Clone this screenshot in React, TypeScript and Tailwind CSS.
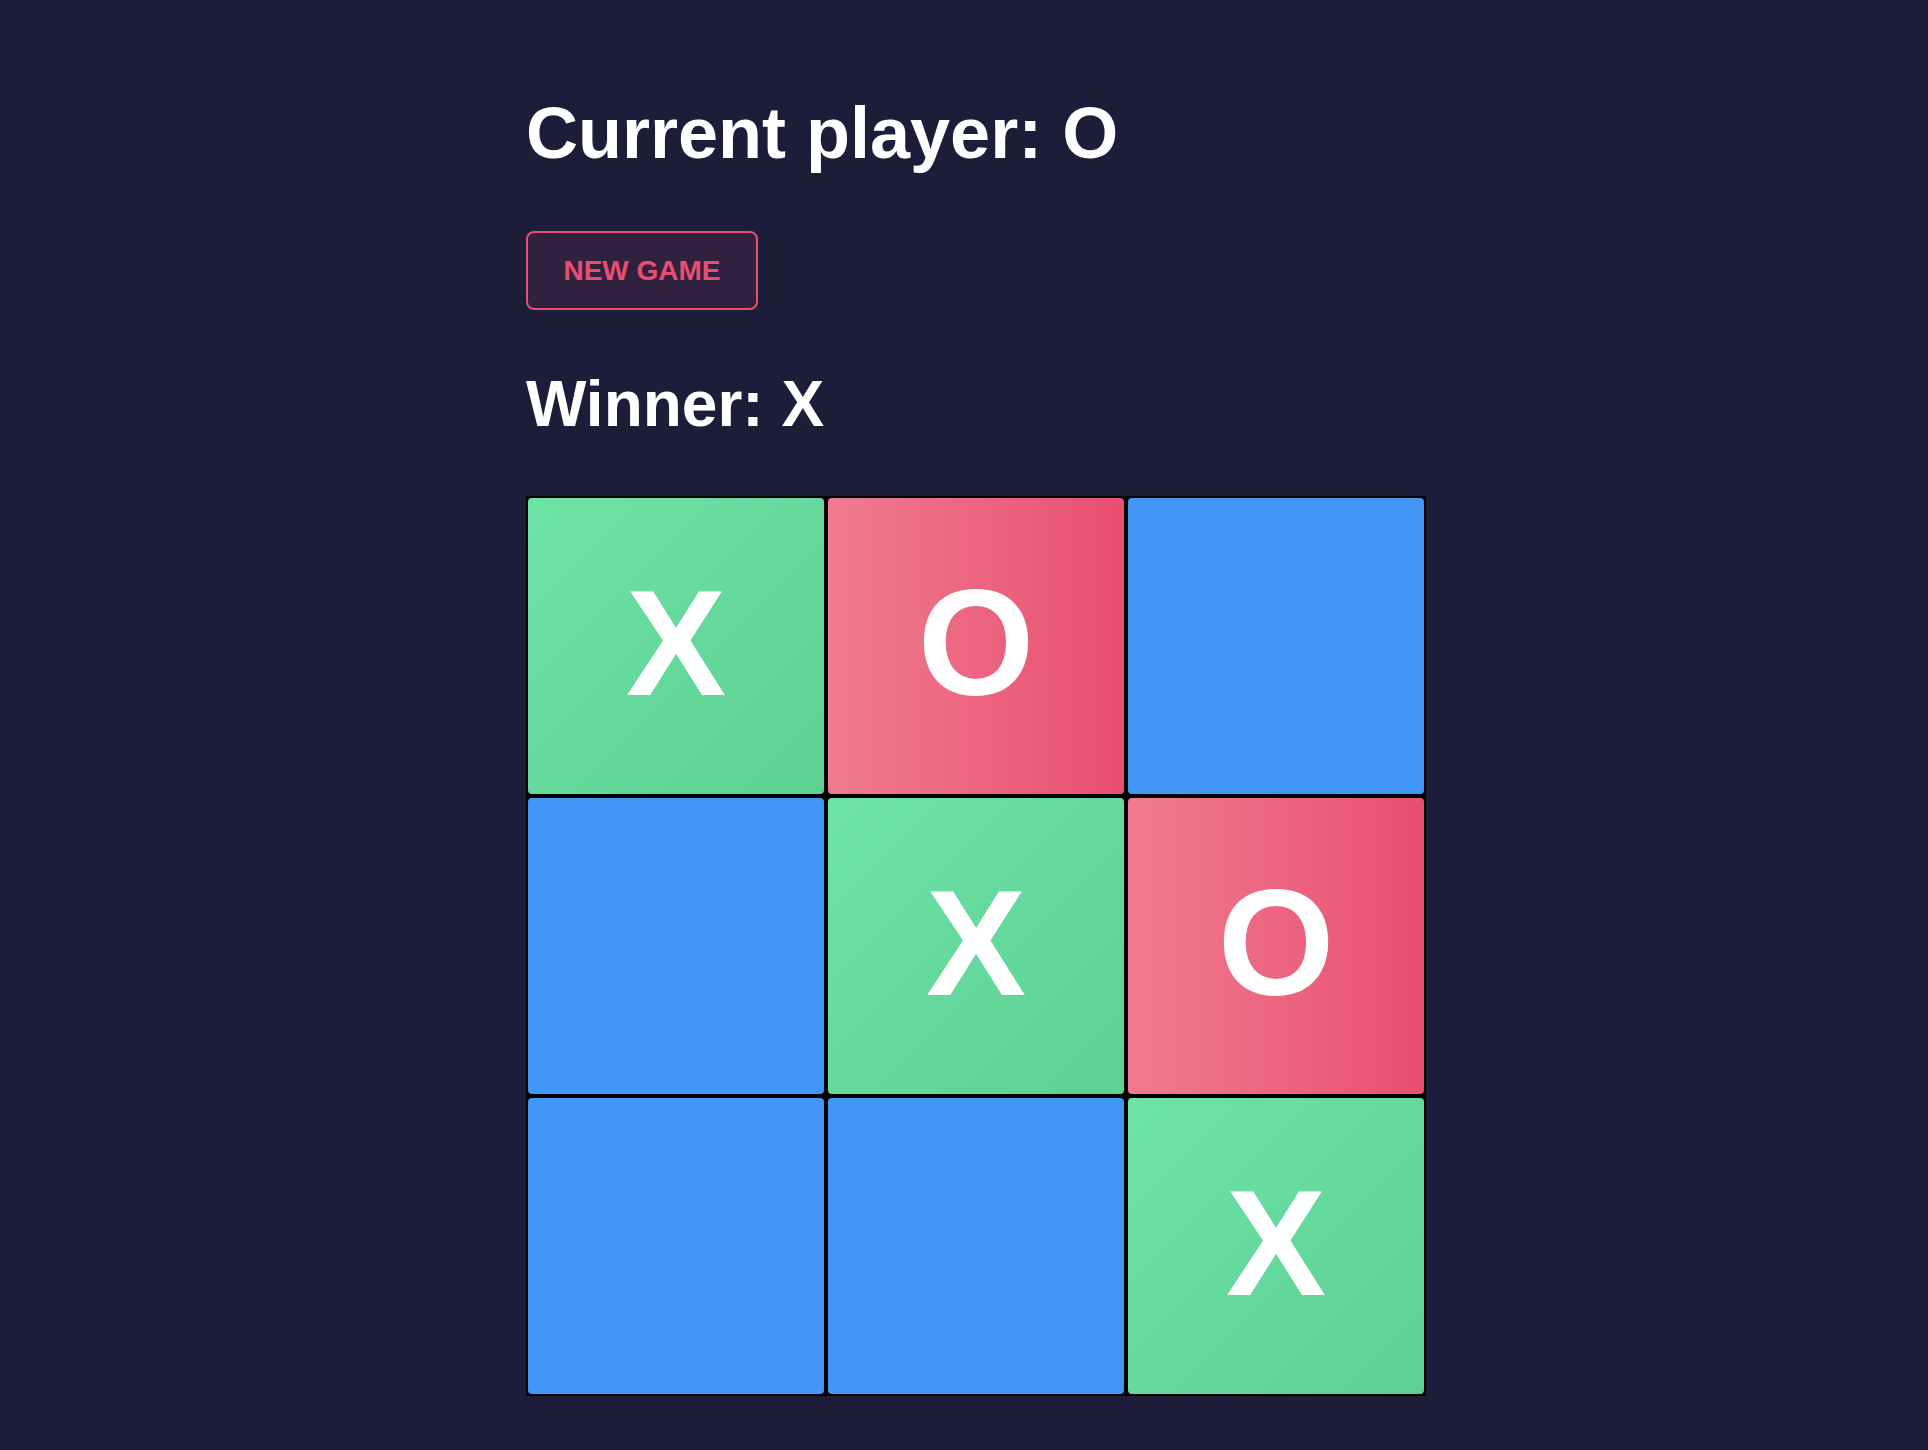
import { useState } from "react";

type Mark = "X" | "O" | null;

const initialBoard: Mark[] = ["X", "O", null, null, "X", "O", null, null, "X"];

const lines = [
  [0, 1, 2], [3, 4, 5], [6, 7, 8],
  [0, 3, 6], [1, 4, 7], [2, 5, 8],
  [0, 4, 8], [2, 4, 6],
];

function getWinner(board: Mark[]): Mark {
  for (const [a, b, c] of lines) {
    if (board[a] && board[a] === board[b] && board[a] === board[c]) return board[a];
  }
  return null;
}

function Cell({ value, onClick }: { value: Mark; onClick: () => void }) {
  const bg =
    value === "X"
      ? "bg-gradient-to-br from-[#6ee3a6] to-[#5dd094]"
      : value === "O"
      ? "bg-gradient-to-r from-[#f07b8f] to-[#e84d72]"
      : "bg-[#4196f5]";
  return (
    <button
      onClick={onClick}
      className={`w-[296px] h-[296px] rounded-[4px] flex items-center justify-center pb-[6px] text-white font-bold text-[150px] leading-none ${bg}`}
    >
      {value}
    </button>
  );
}

export default function App() {
  const [board, setBoard] = useState<Mark[]>(initialBoard);
  const [player, setPlayer] = useState<"X" | "O">("O");
  const winner = getWinner(board);

  const play = (i: number) => {
    if (board[i] || winner) return;
    const next = board.slice();
    next[i] = player;
    setBoard(next);
    setPlayer(player === "X" ? "O" : "X");
  };

  const reset = () => {
    setBoard(Array(9).fill(null));
    setPlayer("X");
  };

  return (
    <div className="min-h-screen bg-[#1c1d38] font-['Liberation_Sans',Arial,sans-serif]">
      <div className="pl-[526px] pt-[97px] flex flex-col items-start gap-[62px]">
        <h1 className="text-white font-bold text-[72px] leading-none">Current player: {player}</h1>

        <button
          onClick={reset}
          className="w-[232px] h-[79px] rounded-lg border-2 border-[#e84d72] bg-[#30223e] text-[#e84d72] font-bold text-[28px] leading-none flex items-center justify-center"
        >
          NEW GAME
        </button>

        <h2 className="text-white font-bold text-[64px] leading-none">Winner: {winner ?? "-"}</h2>

        {/* board */}
        <div className="-mt-[2px] grid grid-cols-3 gap-[4px] p-[2px] bg-black">
          {board.map((v, i) => (
            <Cell key={i} value={v} onClick={() => play(i)} />
          ))}
        </div>
      </div>
    </div>
  );
}
